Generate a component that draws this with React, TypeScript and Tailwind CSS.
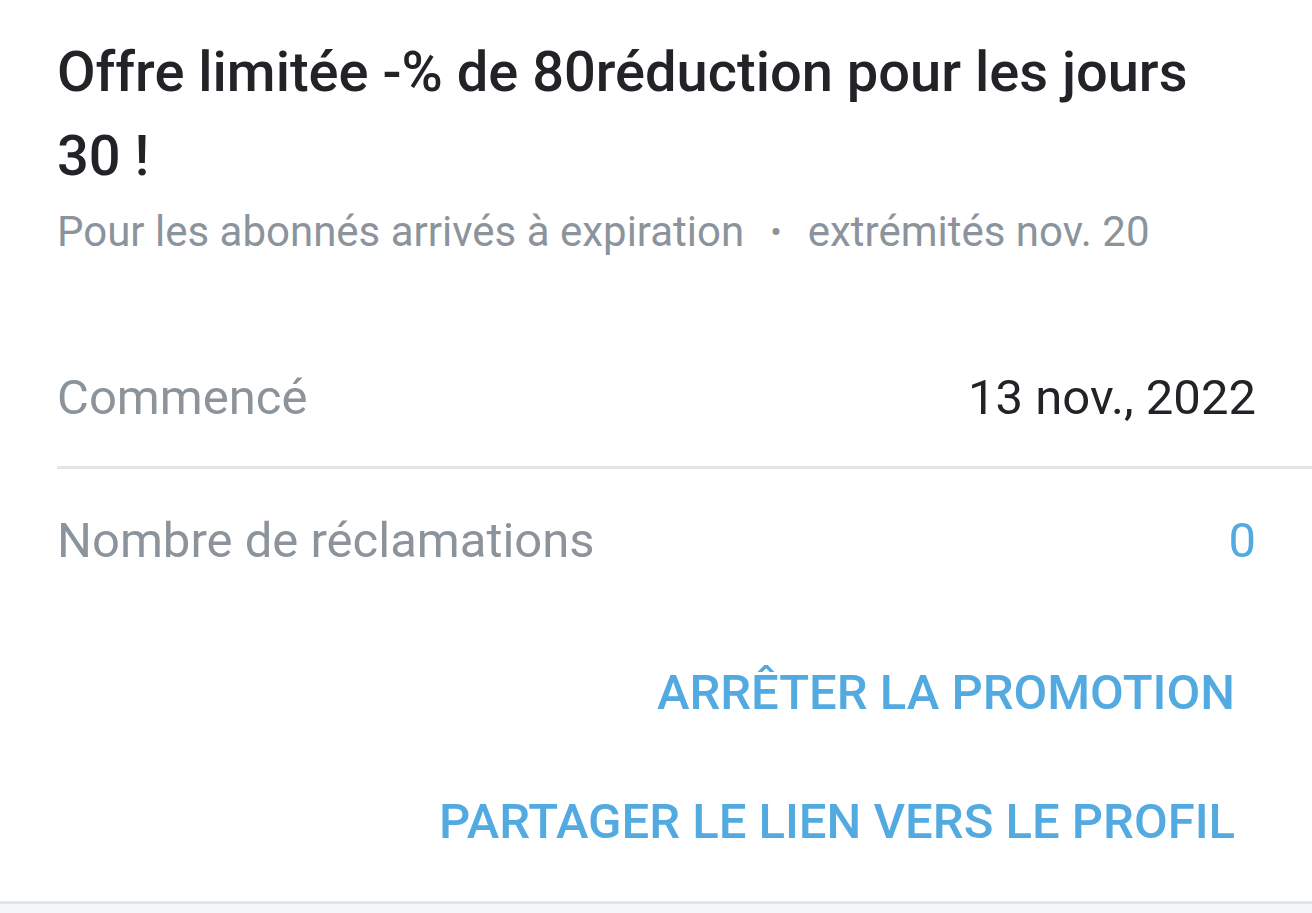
import React from 'react';

const rows = [
  { label: 'Commencé', value: '13 nov., 2022', accent: false },
  { label: 'Nombre de réclamations', value: '0', accent: true },
];

const App = () => {
  return (
    <div className="w-full h-[913px] bg-white flex flex-col font-['Roboto',sans-serif] overflow-hidden">
      <div className="pl-[57px] pr-[56px] pt-[30px]">
        <h2 className="text-[56px] leading-[84px] font-medium text-[#212327]">
          Offre limitée -% de 80réduction pour les jours 30 !
        </h2>
        <div className="mt-[6px] flex items-center gap-[26px] text-[42px] leading-[56px] text-[#8b949c]">
          <span>Pour les abonnés arrivés à expiration</span>
          <span className="text-[34px]">•</span>
          <span>extrémités nov. 20</span>
        </div>
      </div>

      <div className="ml-[57px] mt-[110px]">
        {rows.map((row, i) => (
          <div
            key={row.label}
            className={`flex items-center justify-between pr-[56px] text-[49px] leading-[56px] ${
              i === 0 ? 'pb-[40px] border-b-[3px] border-[#e2e6e9]' : 'pt-[44px]'
            }`}
          >
            <span className="text-[#8b949c]">{row.label}</span>
            <span className={row.accent ? 'text-[#52aae0]' : 'text-[#212327]'}>{row.value}</span>
          </div>
        ))}
      </div>

      <div className="mt-[96px] pr-[77px] flex flex-col items-end gap-[73px] text-[49px] leading-[56px] font-medium text-[#52aae0]">
        <button className="uppercase">Arrêter la promotion</button>
        <button className="uppercase">Partager le lien vers le profil</button>
      </div>

      <div className="flex-1" />
      <div className="h-[12px] border-t-[3px] border-[#e1e5e9] bg-[#f4f6f8]" />
    </div>
  );
};

export default App;
